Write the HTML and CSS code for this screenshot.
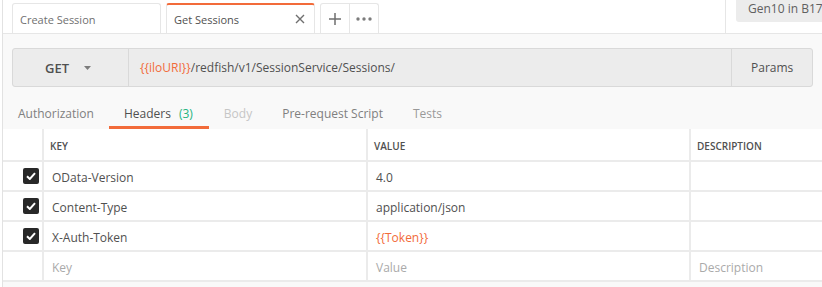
FILE: index.html
```html
<!DOCTYPE html>
<html>
<head>
<meta charset="utf-8">
<link rel="stylesheet" href="styles.css">
</head>
<body>
<div class="app">
  <div class="tabbar">
    <div class="tab">Create Session</div>
    <div class="tab active">Get Sessions
      <svg class="close" width="10" height="10" viewBox="0 0 10 10"><path d="M1 1L9 9M9 1L1 9" stroke="#6f6f6f" stroke-width="1.4" fill="none"/></svg>
    </div>
    <div class="iconbox plus"><svg width="12" height="12" viewBox="0 0 12 12"><path d="M6 0V12M0 6H12" stroke="#6f6f6f" stroke-width="1.5" fill="none"/></svg></div>
    <div class="iconbox dots"><svg width="16" height="4" viewBox="0 0 16 4"><circle cx="2" cy="2" r="1.7" fill="#7c7c7c"/><circle cx="8" cy="2" r="1.7" fill="#7c7c7c"/><circle cx="14" cy="2" r="1.7" fill="#7c7c7c"/></svg></div>
    <div class="envwrap"><div class="env">Gen10 in B17</div></div>
  </div>

  <div class="main">
    <div class="urlbar">
      <div class="method">GET <svg class="caret" width="7" height="4" viewBox="0 0 7 4"><path d="M0 0H7L3.5 4Z" fill="#7c7c7c"/></svg></div>
      <div class="url"><span class="var">{{iloURI}}</span>/redfish/v1/SessionService/Sessions/</div>
      <div class="params">Params</div>
    </div>
  </div>

  <div class="subtabs">
    <div class="subtab">Authorization</div>
    <div class="subtab current">Headers <span class="count">(3)</span></div>
    <div class="subtab disabled">Body</div>
    <div class="subtab">Pre-request Script</div>
    <div class="subtab light">Tests</div>
  </div>

  <div class="grid">
    <div class="cell"></div>
    <div class="cell head">KEY</div>
    <div class="cell head">VALUE</div>
    <div class="cell head">DESCRIPTION</div>

    <div class="cell check"><span class="box"><svg width="10" height="8" viewBox="0 0 10 8"><path d="M1 4.2L3.8 7L9 1.2" stroke="#fff" stroke-width="2" fill="none"/></svg></span></div>
    <div class="cell">OData-Version</div>
    <div class="cell">4.0</div>
    <div class="cell"></div>

    <div class="cell check"><span class="box"><svg width="10" height="8" viewBox="0 0 10 8"><path d="M1 4.2L3.8 7L9 1.2" stroke="#fff" stroke-width="2" fill="none"/></svg></span></div>
    <div class="cell">Content-Type</div>
    <div class="cell">application/json</div>
    <div class="cell"></div>

    <div class="cell check"><span class="box"><svg width="10" height="8" viewBox="0 0 10 8"><path d="M1 4.2L3.8 7L9 1.2" stroke="#fff" stroke-width="2" fill="none"/></svg></span></div>
    <div class="cell">X-Auth-Token</div>
    <div class="cell var">{{Token}}</div>
    <div class="cell"></div>

    <div class="cell"></div>
    <div class="cell ph">Key</div>
    <div class="cell ph">Value</div>
    <div class="cell ph">Description</div>
  </div>
</div>
</body>
</html>
```

FILE: styles.css
```css
html, body {
  margin: 0;
  padding: 0;
  overflow: hidden;
  width: 822px;
  height: 287px;
}
body {
  font-family: "Open Sans", "Noto Sans", sans-serif;
  font-size: 12px;
  color: #505050;
  background: #fff;
}
.app {
  margin-left: 2px;
  border-left: 1px solid #e2e2e2;
  height: 287px;
  background: #f9f9f9;
}
.tabbar {
  height: 33px;
  background: #fff;
  border-bottom: 1px solid #e6e6e6;
  display: flex;
  align-items: flex-end;
  padding-left: 9px;
}
.tab {
  box-sizing: border-box;
  width: 149px;
  height: 30px;
  border: 1px solid #e6e6e6;
  border-bottom: none;
  border-radius: 3px 3px 0 0;
  margin-right: 5px;
  padding-left: 7px;
  padding-top: 1px;
  display: flex;
  align-items: center;
  color: #707070;
  background: #fff;
  font-size: 11px;
}
.tab.active {
  border-top: 2px solid #f26b3a;
  color: #505050;
  padding-top: 0;
}
.close {
  margin-left: auto;
  margin-right: 9px;
}
.iconbox {
  box-sizing: border-box;
  width: 30px;
  height: 30px;
  border: 1px solid #e6e6e6;
  border-bottom: none;
  display: flex;
  align-items: center;
  justify-content: center;
  background: #fff;
}
.plus {
  border-radius: 3px 0 0 0;
}
.dots {
  border-left: none;
  width: 29px;
  border-radius: 0 3px 0 0;
}
.envwrap {
  margin-left: auto;
  align-self: stretch;
  width: 86px;
  padding-left: 10px;
  border-left: 1px solid #e6e6e6;
}
.env {
  height: 22px;
  background: #ececec;
  border-radius: 0 0 0 3px;
  padding-left: 12px;
  line-height: 18px;
  white-space: nowrap;
  overflow: hidden;
  color: #606060;
  font-size: 12px;
}
.main {
  padding: 14px 9px 0 9px;
}
.urlbar {
  height: 37px;
  border: 1px solid #d9d9d9;
  border-radius: 3px;
  background: #ececec;
  display: flex;
}
.method {
  width: 83px;
  padding-left: 32px;
  padding-top: 1px;
  border-right: 1px solid #d9d9d9;
  display: flex;
  align-items: center;
  font-size: 13px;
  font-weight: 600;
  color: #505050;
}
.caret {
  margin-left: 15px;
}
.url {
  flex: 1;
  padding-left: 11px;
  display: flex;
  align-items: center;
  font-size: 12px;
  color: #505050;
}
.var {
  color: #f26b3a;
}
.params {
  width: 61px;
  padding-left: 19px;
  border-left: 1px solid #d9d9d9;
  display: flex;
  align-items: center;
  color: #505050;
}
.subtabs {
  height: 42px;
  display: flex;
}
.subtab {
  box-sizing: border-box;
  padding: 13px 15px 0 15px;
  height: 42px;
  display: flex;
  align-items: center;
  color: #808080;
  border-bottom: 3px solid transparent;
}
.subtab.current {
  color: #505050;
  border-bottom-color: #f26b3a;
  padding-right: 16px;
}
.count {
  color: #26b47f;
  margin-left: 8px;
}
.subtab.disabled {
  color: #c6c6c6;
}
.subtab.light {
  color: #999;
}
.grid {
  display: grid;
  grid-template-columns: 39px 322px 321px 1fr;
  grid-template-rows: 31px 28px 28px 28px 28px;
  column-gap: 2px;
  row-gap: 2px;
  background: #ebebeb;
  border-bottom: 2px solid #ebebeb;
}
.cell {
  background: #fff;
  display: flex;
  align-items: center;
  padding-left: 8px;
  padding-top: 2px;
  white-space: nowrap;
  overflow: hidden;
}
.cell.head {
  font-size: 10px;
  font-weight: 600;
  color: #505050;
  padding-left: 6px;
}
.cell.check {
  justify-content: flex-end;
  padding-left: 0;
  padding-right: 3px;
  padding-top: 0;
}
.box {
  width: 16px;
  height: 16px;
  border-radius: 2px;
  background: #282828;
  display: flex;
  align-items: center;
  justify-content: center;
}
.cell.ph {
  color: #aaaaaa;
}
```
